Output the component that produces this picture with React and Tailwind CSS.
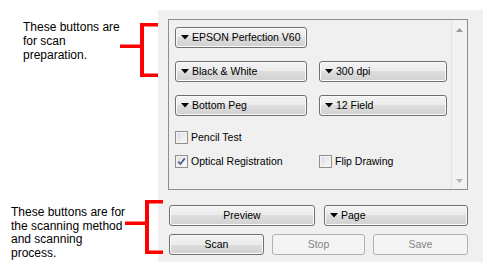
import React from 'react';

const btnBase =
  'h-[21px] rounded-[3px] border text-[10.5px] leading-none flex items-center whitespace-nowrap';
const btnOn =
  'border-[#707070] text-black bg-[linear-gradient(#f3f3f3,#ebebeb_50%,#dddddd_50%,#d1d1d1)] shadow-[inset_0_0_0_1px_#fbfbfb]';
const btnOff = 'border-[#adb2b5] text-[#838383] bg-[#f4f4f4]';

function Arrow() {
  return (
    <svg width="8" height="5" viewBox="0 0 8 5" className="shrink-0">
      <polygon points="0,0 8,0 4,4.5" fill="#000" />
    </svg>
  );
}

function DropButton({ label, className }) {
  return (
    <div className={`${btnBase} ${btnOn} pl-[5px] gap-[3px] ${className}`}>
      <Arrow />
      <span>{label}</span>
    </div>
  );
}

function Button({ label, disabled, className }) {
  return (
    <div className={`${btnBase} ${disabled ? btnOff : btnOn} justify-center ${className}`}>
      {label}
    </div>
  );
}

function Checkbox({ label, checked }) {
  return (
    <div className="flex items-center gap-[3px] h-[13px]">
      <div className="w-[13px] h-[13px] border border-[#8e8f8f] bg-[linear-gradient(135deg,#dcdcdc,#fbfbfb)] shadow-[inset_0_0_0_1px_#f4f4f4] flex items-center justify-center">
        {checked && (
          <svg width="9" height="9" viewBox="0 0 9 9">
            <path d="M1.2 4.6 L3.4 7 L7.8 1.4" stroke="#4a5f97" strokeWidth="1.7" fill="none" />
          </svg>
        )}
      </div>
      <span className="text-[10.5px] leading-none text-black whitespace-nowrap">{label}</span>
    </div>
  );
}

function Bracket() {
  return (
    <svg width="38" height="54" viewBox="0 0 38 54" className="relative z-10 shrink-0 overflow-visible">
      <g fill="#ff0000">
        <rect x="20" y="0" width="4" height="54" />
        <rect x="20" y="0" width="18" height="3.5" />
        <rect x="20" y="50.5" width="18" height="3.5" />
        <rect x="0" y="21.5" width="22" height="3.5" />
      </g>
    </svg>
  );
}

export default function App() {
  return (
    <div className="w-[494px] h-[272px] bg-white flex font-['Liberation_Sans',Arial,sans-serif] overflow-hidden">
      {/* annotations */}
      <div className="w-[158px] shrink-0 flex flex-col">
        <div className="mt-[20px] flex items-start">
          <div className="w-[125px] pl-[23px] text-[12px] leading-[14px] text-black whitespace-nowrap">
            These buttons are
            <br />
            for scan
            <br />
            preparation.
          </div>
          <div className="mt-[3px]">
            <Bracket />
          </div>
        </div>
        <div className="mt-[123px] flex items-start">
          <div className="w-[125px] pl-[11px] mt-[6px] text-[12px] leading-[13.5px] text-black whitespace-nowrap">
            These buttons are for
            <br />
            the scanning method
            <br />
            and scanning
            <br />
            process.
          </div>
          <Bracket />
        </div>
      </div>

      {/* scanner panel */}
      <div className="mt-[10px] w-[325px] h-[252px] bg-[#f0f0f0] pt-[9px] pl-[10px] flex flex-col">
        <div className="w-[300px] h-[171px] border border-[#8c8e94] flex">
          <div className="flex-1 pl-[6px] pt-[7px] flex flex-col">
            <DropButton label="EPSON Perfection V60" className="w-[132px]" />
            <div className="mt-[13px] flex gap-[12px]">
              <DropButton label="Black & White" className="w-[132px]" />
              <DropButton label="300 dpi" className="w-[128px]" />
            </div>
            <div className="mt-[13px] flex gap-[12px]">
              <DropButton label="Bottom Peg" className="w-[132px]" />
              <DropButton label="12 Field" className="w-[128px]" />
            </div>
            <div className="mt-[15px]">
              <Checkbox label="Pencil Test" />
            </div>
            <div className="mt-[11px] flex">
              <div className="w-[144px]">
                <Checkbox label="Optical Registration" checked />
              </div>
              <Checkbox label="Flip Drawing" />
            </div>
          </div>
          <div className="w-[16px] border-l border-[#e4e4e4] bg-[#f2f2f2] flex flex-col items-center justify-between pt-[8px] pb-[6px]">
            <svg width="7" height="4" viewBox="0 0 7 4">
              <polygon points="0,4 7,4 3.5,0" fill="#9a9a9a" />
            </svg>
            <svg width="7" height="4" viewBox="0 0 7 4">
              <polygon points="0,0 7,0 3.5,4" fill="#b4b4b4" />
            </svg>
          </div>
        </div>

        <div className="mt-[15px] pl-[1px] flex gap-[9px]">
          <Button label="Preview" className="w-[146px]" />
          <DropButton label="Page" className="w-[144px]" />
        </div>
        <div className="mt-[8px] pl-[1px] flex gap-[8px]">
          <Button label="Scan" className="w-[95px]" />
          <Button label="Stop" disabled className="w-[93px]" />
          <Button label="Save" disabled className="w-[95px]" />
        </div>
      </div>
    </div>
  );
}
